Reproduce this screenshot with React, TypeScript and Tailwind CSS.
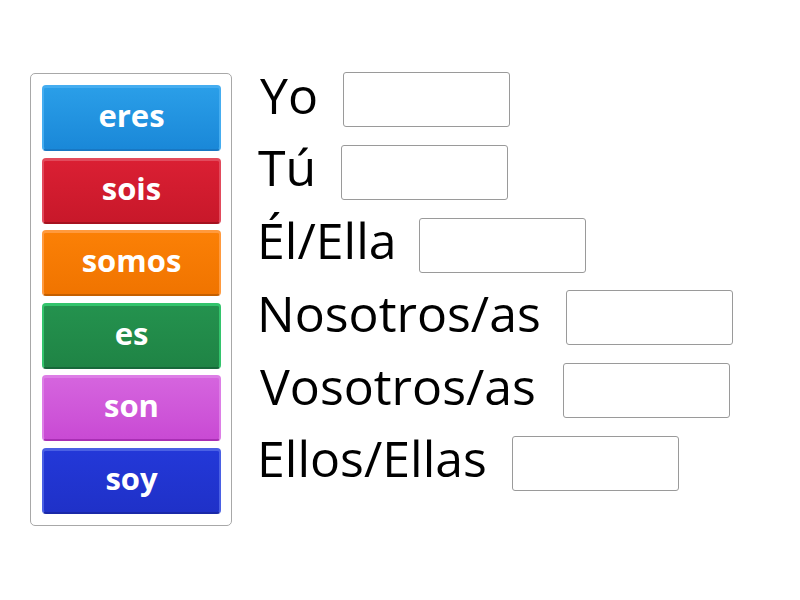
import React from 'react';

const words = [
  { text: 'eres', rim: 'border-[#45adf0] border-b-[#1878c4]', face: 'from-[#2a9ee8] to-[#1a88d8]' },
  { text: 'sois', rim: 'border-[#e24a5c] border-b-[#a5111f]', face: 'from-[#da1f33] to-[#c8182a]' },
  { text: 'somos', rim: 'border-[#ff9a3e] border-b-[#c45f00]', face: 'from-[#fb8006] to-[#f07400]' },
  { text: 'es', rim: 'border-[#33c46c] border-b-[#17683a]', face: 'from-[#24924e] to-[#1f8445]' },
  { text: 'son', rim: 'border-[#dd7ee6] border-b-[#a92fb4]', face: 'from-[#d564de] to-[#c94ad4]' },
  { text: 'soy', rim: 'border-[#4a60e4] border-b-[#1a29a8]', face: 'from-[#2338d8] to-[#1f31c8]' },
];

// each row's label offset and gap before its answer box
const pronouns = [
  { text: 'Yo', row: 'pl-[3px] gap-[25px]' },
  { text: 'Tú', row: 'pl-[1px] gap-[25px]' },
  { text: 'Él/Ella', row: 'pl-0 gap-[22px]' },
  { text: 'Nosotros/as', row: 'pl-0 gap-[25px]' },
  { text: 'Vosotros/as', row: 'pl-[3px] gap-[27px]' },
  { text: 'Ellos/Ellas', row: 'pl-0 gap-[25px]' },
];

export default function App() {
  return (
    <div
      className="w-[800px] h-[600px] bg-white flex items-start"
      style={{ fontFamily: '"Open Sans", "Noto Sans", sans-serif' }}
    >
      {/* Word bank */}
      <div className="ml-[30px] mt-[73px] w-[202px] h-[453px] border border-[#a8a8a8] rounded-[5px] px-[11px] pt-[11px] flex flex-col gap-[6.6px]">
        {words.map((w) => (
          <div
            key={w.text}
            className={`h-[66px] w-[179px] rounded-[4px] border-[2px] border-t-[3px] bg-gradient-to-b ${w.rim} ${w.face} flex items-center justify-center`}
          >
            <span className="text-white font-bold text-[31px] leading-none pb-[6px]">{w.text}</span>
          </div>
        ))}
      </div>

      {/* Pronoun rows */}
      <div className="ml-[25px] mt-[72px] flex flex-col gap-[17.8px]">
        {pronouns.map((p) => (
          <div key={p.text} className={`h-[55px] flex items-center ${p.row}`}>
            <span className="text-black text-[50px] leading-none pb-[10px]">{p.text}</span>
            <div className="w-[167px] h-[55px] bg-white border border-[#9a9a9a] rounded-[3px]" />
          </div>
        ))}
      </div>
    </div>
  );
}
